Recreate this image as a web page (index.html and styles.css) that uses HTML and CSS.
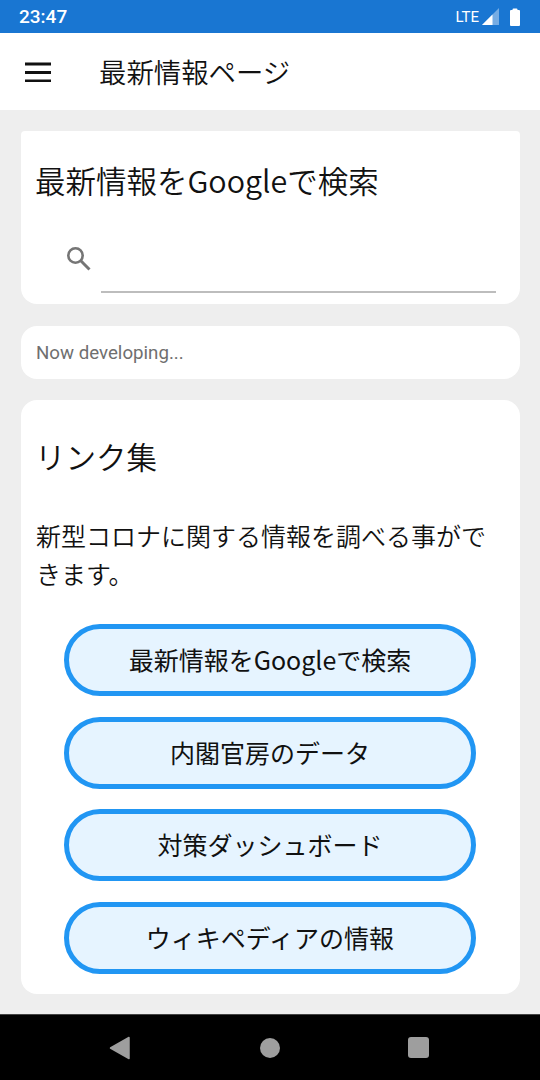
FILE: index.html
```html
<!DOCTYPE html>
<html lang="ja">
<head>
<meta charset="utf-8">
<title>最新情報ページ</title>
<link rel="stylesheet" href="styles.css">
</head>
<body>
<div class="status">
  <span class="time">23:47</span>
  <div class="status-icons">
    <span class="lte">LTE</span>
    <svg class="signal" width="17" height="17" viewBox="0 0 17 17"><path d="M17 0V17H0Z" fill="#fff" fill-opacity=".4"/><path d="M10.5 6.5V17H0Z" fill="#fff"/></svg>
    <svg class="battery" width="12" height="18" viewBox="0 0 12 18"><path d="M3.5 1.5A1 1 0 0 1 4.500.5h3a1 1 0 0 1 1 1V2h1.500A1 1 0 0 1 11 3v14a1 1 0 0 1-1 1H2a1 1 0 0 1-1-1V3a1 1 0 0 1 1-1h1.500Z" fill="#fff"/></svg>
  </div>
</div>
<header class="appbar">
  <svg class="menu" width="26" height="20" viewBox="0 0 26 20"><path d="M0 2H26M0 10.500H26M0 19H26" stroke="#111" stroke-width="3"/></svg>
  <h1 class="appbar-title">最新情報ページ</h1>
</header>
<main class="content">
  <section class="card card-search">
    <h2 class="card-title">最新情報をGoogleで検索</h2>
    <div class="search-row">
      <svg class="search-icon" width="27" height="27" viewBox="0 0 27 27"><circle cx="10.500" cy="10.500" r="7.200" fill="none" stroke="#757575" stroke-width="2.600"/><path d="M15.800 15.800L24.500 24.500" stroke="#757575" stroke-width="3"/></svg>
      <div class="search-field"></div>
    </div>
  </section>
  <section class="card card-note">Now developing...</section>
  <section class="card card-links">
    <h2 class="card-title links-title">リンク集</h2>
    <p class="intro">新型コロナに関する情報を調べる事ができます。</p>
    <div class="buttons">
      <a class="pill">最新情報をGoogleで検索</a>
      <a class="pill">内閣官房のデータ</a>
      <a class="pill">対策ダッシュボード</a>
      <a class="pill">ウィキペディアの情報</a>
    </div>
  </section>
</main>
<nav class="navbar">
  <svg width="22" height="24" viewBox="0 0 22 24"><path d="M20 1.500V22.500L1.500 12Z" fill="#9e9e9e" stroke="#9e9e9e" stroke-width="1.500" stroke-linejoin="round"/></svg>
  <span class="nav-circle"></span>
  <span class="nav-square"></span>
</nav>
</body>
</html>
```
FILE: styles.css
```css
* { box-sizing: border-box; }
html, body { margin: 0; padding: 0; }
body {
  width: 540px;
  height: 1080px;
  overflow: hidden;
  display: flex;
  flex-direction: column;
  background: #eeeeee;
  font-family: "Noto Sans CJK JP", "Noto Sans", sans-serif;
  color: #111;
}
.status {
  height: 33px;
  flex: none;
  background: #1976d2;
  display: flex;
  align-items: center;
  justify-content: space-between;
  padding: 0 19px;
  color: #fff;
  font-family: Roboto, sans-serif;
}
.time { font-size: 19px; font-weight: 500; }
.status-icons { display: flex; align-items: center; }
.lte { font-size: 15px; margin-right: 3px; }
.signal { margin-right: 10px; }
.appbar {
  height: 77px;
  flex: none;
  background: #fff;
  display: flex;
  align-items: center;
  padding-left: 25px;
}
.menu { margin-right: 49px; }
.appbar-title { margin: 0; font-size: 27.4px; font-weight: 350; line-height: 1; margin-left: -1px; }
.content {
  flex: 1;
  display: flex;
  flex-direction: column;
  gap: 21.500px;
  padding: 21px 20px 0 21px;
}
.card { background: #fff; border-radius: 16px; }
.card-search {
  height: 173px;
  border-radius: 4px 4px 16px 16px;
  padding: 26px 24px 0 14px;
}
.card-title { margin: 0; font-size: 30.500px; font-weight: 350; line-height: 46px; }
.search-row { display: flex; align-items: flex-end; margin-top: 42px; padding-left: 31px; }
.search-icon { flex: none; margin-right: 9px; margin-bottom: 21px; margin-left: -1px; }
.search-field { flex: 1; height: 41px; border-bottom: 2px solid #bdbdbd; }
.card-note {
  height: 53px;
  display: flex;
  align-items: center;
  padding: 2px 0 0 15px;
  font-family: Roboto, sans-serif;
  font-size: 18.700px;
  color: #6f6f6f;
}
.card-links { height: 594px; padding: 33px 15px 0 14px; }
.intro { margin: 38px 0 0 1px; font-size: 25px; font-weight: 350; line-height: 37.500px; }
.buttons { display: flex; flex-direction: column; gap: 20.500px; margin: 32px 29px 0 29px; }
.pill {
  height: 72px;
  border: 5px solid #2196f3;
  border-radius: 36px;
  background: #e6f4ff;
  display: flex;
  align-items: center;
  justify-content: center;
  padding-bottom: 2px;
  font-size: 25px;
  font-weight: 400;
  color: #111;
}
.navbar {
  height: 66px;
  flex: none;
  background: #000;
  border-top: 1px solid #444;
  display: flex;
  align-items: center;
  padding-left: 109px;
}
.nav-circle { width: 20px; height: 20px; border-radius: 50%; background: #9e9e9e; margin-left: 129px; }
.nav-square { width: 21px; height: 21px; border-radius: 3px; background: #9e9e9e; margin-left: 128px; }
```
